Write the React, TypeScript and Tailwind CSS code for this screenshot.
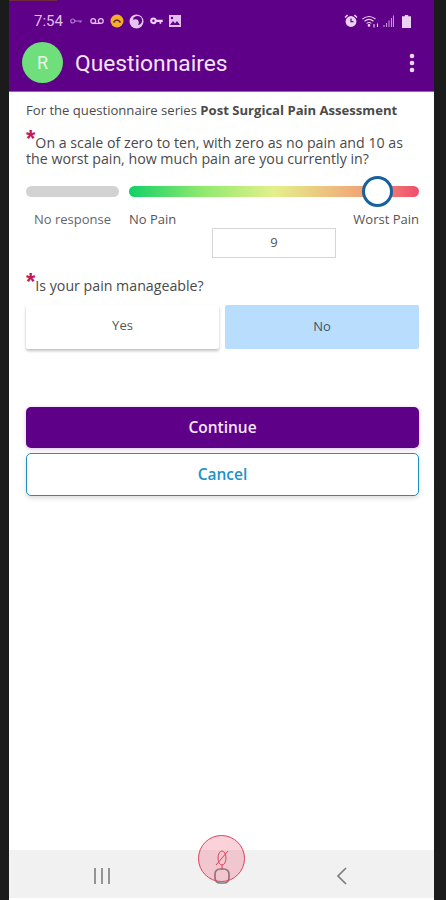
import React from 'react';
import { MoreVertical } from 'lucide-react';

const StatusIcons = () => (
  <div className="flex items-center gap-[6px]">
    <svg width="13" height="8" viewBox="0 0 14 8" fill="none" stroke="#b67fd0" strokeWidth="1.2">
      <circle cx="3" cy="4" r="2.2" />
      <path d="M5 4h8M11 4v2" />
    </svg>
    <svg width="14" height="8" viewBox="0 0 14 8" fill="none" stroke="#e3bdec" strokeWidth="1.3" className="ml-[1px]">
      <circle cx="3.2" cy="4" r="2.4" />
      <circle cx="10.8" cy="4" r="2.4" />
      <path d="M3.2 6.4h7.6" />
    </svg>
    <svg width="14" height="14" viewBox="0 0 14 14">
      <circle cx="7" cy="7" r="6.5" fill="#f5ae2a" />
      <path d="M3.5 8.5 Q7 3.5 10.5 8.5" fill="none" stroke="#5a2a40" strokeWidth="1.6" />
    </svg>
    <svg width="15" height="15" viewBox="0 0 15 15" className="ml-[-1px]">
      <circle cx="7.5" cy="7.5" r="7" fill="#e6c4ee" />
      <circle cx="8.5" cy="6.5" r="4.6" fill="#5f0088" />
      <circle cx="6.4" cy="8.6" r="3.4" fill="#e6c4ee" />
    </svg>
    <svg width="13" height="8" viewBox="0 0 14 9" fill="#ecd2f2">
      <path d="M3.6 0.5a3.8 3.8 0 0 1 3.6 2.6H14v2.4h-1.6v2h-2v-2H7.2A3.8 3.8 0 1 1 3.6 0.5zm0 2.4a1.4 1.4 0 1 0 0 2.8 1.4 1.4 0 0 0 0-2.8z" />
    </svg>
    <svg width="12" height="12" viewBox="0 0 12 12">
      <rect width="12" height="12" fill="#e3bdec" />
      <path d="M1 10l3-4 2 2.5L8 6l3 4z" fill="#5f0088" />
      <circle cx="3" cy="3" r="1.2" fill="#5f0088" />
    </svg>
  </div>
);

const StatusRight = () => (
  <div className="flex items-center">
    <svg width="14" height="14" viewBox="0 0 14 14" className="mr-[4px]">
      <path d="M0.5 3L3 0.5l1.2 1.1L1.6 4zM13.5 3L11 0.5 9.8 1.6 12.4 4z" fill="#ecd2f2" />
      <circle cx="7" cy="7.5" r="5.4" fill="#ecd2f2" />
      <path d="M7 4.5v3.2h2.4" fill="none" stroke="#5f0088" strokeWidth="1.2" />
    </svg>
    <svg width="17" height="13" viewBox="0 0 17 13" fill="none" stroke="#ecd2f2" strokeWidth="1.1" className="mr-[4px]">
      <path d="M0.5 4Q7 -1 13.5 4M2.5 6.2Q7 2.6 11.5 6.2M4.6 8.4Q7 6.6 9.4 8.4" />
      <circle cx="7" cy="10.4" r="0.8" fill="#ecd2f2" />
      <path d="M12 9v3.5M15.5 8.5V12" />
    </svg>
    <svg width="11" height="12" viewBox="0 0 11 12" stroke="#c596d4" strokeWidth="1.1" className="mr-[8px]">
      <path d="M1 12V10M3.5 12V8M6 12V5.5M8.5 12V3M10.5 12V0.5" />
    </svg>
    <svg width="9" height="13" viewBox="0 0 9 13" fill="#ecd2f2">
      <path d="M2.8 0h3.4v1.2H9V13H0V1.2h2.8z" />
    </svg>
  </div>
);

const Asterisk = () => (
  <span className="text-[24px] leading-[0] font-bold text-[#c2185b] font-['Liberation_Sans',sans-serif] align-[1px]">*</span>
);

export default function App() {
  return (
    <div className="w-[446px] h-[900px] flex bg-[#1b1b1b] pl-[9px] pr-[12px] font-['Open_Sans',sans-serif] overflow-hidden">
      <div className="relative flex-1 flex flex-col bg-white">
        <header className="h-[92px] shrink-0 bg-[#5f0088] border-b border-[#a45bc0] pl-[13px] pr-[12px]">
          <div className="h-[42px] flex items-center justify-between pl-[12px] pr-[11px]">
            <div className="flex items-center gap-[7px]">
              <span className="text-[15px] text-[#e3bdec] font-['Roboto',sans-serif]">7:54</span>
              <StatusIcons />
            </div>
            <StatusRight />
          </div>
          <div className="flex items-center">
            <div className="w-[41px] h-[41px] rounded-full bg-[#6fdf7b] flex items-center justify-center text-[18px] text-[#e8f8e6] font-['Roboto',sans-serif]">
              R
            </div>
            <h1 className="ml-[12px] pt-[3px] text-[22.8px] text-[#f3e3f7] font-['Roboto',sans-serif]">Questionnaires</h1>
            <MoreVertical className="ml-auto mr-[-2px] w-[24px] h-[24px] text-[#f0dcf5]" strokeWidth={2.6} />
          </div>
        </header>

        <main className="flex-1 pl-[17px] pr-[15px] text-[#4a4a4a]">
          <p className="mt-[9px] text-[13.1px] leading-[18px]">
            For the questionnaire series <b className="font-bold">Post Surgical Pain Assessment</b>
          </p>

          <p className="mt-[16px] text-[14.2px] leading-[16px]">
            <Asterisk />
            On a scale of zero to ten, with zero as no pain and 10 as the worst pain, how much pain are you currently in?
          </p>

          <div className="mt-[19px] flex gap-[10px]">
            <div className="w-[93px] shrink-0">
              <div className="h-[11px] rounded-full bg-[#d2d2d2]" />
              <p className="mt-[13px] text-center text-[13px] leading-[18px] text-[#666]">No response</p>
            </div>
            <div className="flex-1">
              <div className="relative h-[11px] rounded-full bg-[linear-gradient(to_right,#13d067_0%,#8ee96f_25%,#e4f08a_50%,#f2a578_80%,#f04d6c_100%)]">
                <div className="absolute left-[233px] top-[-10px] w-[31px] h-[31px] rounded-full bg-white border-[3px] border-[#17619c]" />
              </div>
              <div className="mt-[13px] flex justify-between text-[13px] leading-[18px] text-[#555]">
                <span>No Pain</span>
                <span>Worst Pain</span>
              </div>
            </div>
          </div>

          <div className="ml-[186px] w-[124px] h-[30px] border border-[#d5d5d5] flex items-center justify-center text-[13px] text-[#555]">
            9
          </div>

          <p className="mt-[18px] text-[14.2px] leading-[20px]">
            <Asterisk />
            Is your pain manageable?
          </p>

          <div className="mt-[9px] grid grid-cols-[193px_194px] gap-[6px]">
            <button className="h-[44px] rounded-[2px] bg-white shadow-[0_2px_3px_rgba(0,0,0,0.25)] text-[13px] text-[#555] pb-[2px]">Yes</button>
            <button className="h-[44px] rounded-[2px] bg-[#b9defd] text-[13px] text-[#3f5566]">No</button>
          </div>

          <button className="mt-[58px] w-full h-[41px] rounded-[5px] bg-[#5f0088] text-[15.5px] font-semibold text-[#f5e6f8] shadow-[0_1px_4px_rgba(95,0,136,0.25)]">
            Continue
          </button>
          <button className="mt-[5px] w-full h-[43px] rounded-[5px] bg-white border-[1.5px] border-[#1f8fc0] text-[15.5px] font-semibold text-[#1b93c8] shadow-[0_2px_5px_rgba(0,0,0,0.15)]">
            Cancel
          </button>
        </main>

        <nav className="h-[48px] mb-[2px] shrink-0 bg-[#f1f1f1] flex items-center justify-between pl-[85px] pr-[87px] text-[#7d7d7d]">
          <svg width="16" height="16" viewBox="0 0 16 16" stroke="currentColor" strokeWidth="1.6" className="mt-[4px]">
            <path d="M1 0v16M8 0v16M15 0v16" />
          </svg>
          <svg width="16" height="16" viewBox="0 0 16 16" fill="none" stroke="currentColor" strokeWidth="1.7" className="mt-[4px] mr-[2px]">
            <rect x="1" y="1" width="14" height="14" rx="5" />
          </svg>
          <svg width="11" height="18" viewBox="0 0 11 18" fill="none" stroke="currentColor" strokeWidth="1.7" className="mt-[4px]">
            <path d="M10 1L2 9l8 8" />
          </svg>
        </nav>

        {/* touch indicator overlay */}
        <div className="absolute left-[189px] top-[835px] w-[47px] h-[47px] rounded-full bg-[#f04d6c]/25 border border-[#e0405f] flex justify-center">
          <svg width="16" height="20" viewBox="0 0 16 20" fill="none" stroke="#e0405f" strokeWidth="1" className="mt-[14px]">
            <ellipse cx="8" cy="8" rx="4" ry="7" />
            <path d="M2 15L14 1M8 15v5" />
          </svg>
        </div>

        {/* sliver of the window behind, top edge */}
        <div className="absolute left-0 top-0 w-[48px] h-[1px] bg-[#6b2b3c]" />
      </div>
    </div>
  );
}
